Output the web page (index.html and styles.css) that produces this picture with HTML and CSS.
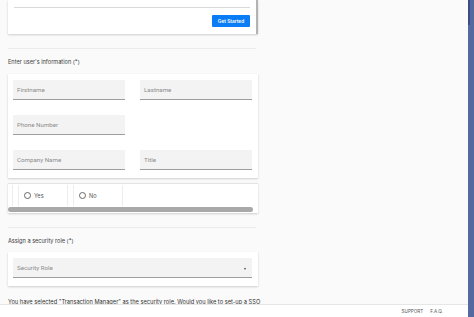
FILE: index.html
```html
<!DOCTYPE html>
<html lang="en">
<head>
    <meta charset="UTF-8">
    <meta name="viewport" content="width=device-width, initial-scale=1.0">
    <title>New User</title>
    <link rel="stylesheet" href="styles.css">
</head>
<body>
    <div class="app">
        <div class="main">
            <div class="content">
                <div class="card card-top">
                    <div class="card-rule"></div>
                    <div class="actions">
                        <button class="btn-primary">Get Started</button>
                    </div>
                </div>

                <hr class="divider">

                <p class="section-label">Enter user's information (*)</p>
                <div class="card form-card">
                    <div class="field">Firstname</div>
                    <div class="field">Lastname</div>
                    <div class="field">Phone Number</div>
                    <div class="field-empty"></div>
                    <div class="field">Company Name</div>
                    <div class="field">Title</div>
                </div>

                <div class="card radio-card">
                    <div class="radio-row">
                        <div class="cell cell-thin"></div>
                        <div class="cell cell-gap"></div>
                        <label class="cell cell-option"><span class="radio"></span>Yes</label>
                        <div class="cell cell-gap"></div>
                        <label class="cell cell-option"><span class="radio"></span>No</label>
                    </div>
                    <div class="scroll-track">
                        <div class="scroll-thumb"></div>
                    </div>
                </div>

                <hr class="divider">

                <p class="section-label">Assign a security role (*)</p>
                <div class="card select-card">
                    <div class="field select">
                        <span>Security Role</span>
                        <span class="caret"></span>
                    </div>
                </div>

                <p class="question">You have selected "Transaction Manager" as the security role. Would you like to set-up a SSO for this user? (*)</p>
            </div>
            <footer class="footer">
                <a href="#">SUPPORT</a>
                <a href="#">F.A.Q.</a>
            </footer>
        </div>
        <div class="sidebar">
            <div class="sidebar-mark"></div>
        </div>
    </div>
</body>
</html>
```

FILE: styles.css
```css
body {
    margin: 0;
    font-family: 'Inter', 'Roboto', sans-serif;
    background-color: #fafafa;
    color: #333333;
}
.app {
    display: flex;
    height: 317px;
    overflow: hidden;
}
.main {
    flex: 1;
    display: flex;
    flex-direction: column;
    background-color: #fafafa;
}
.content {
    flex: 1;
    overflow: hidden;
    padding-left: 8px;
    width: 262px;
}
.card {
    background-color: #ffffff;
    box-shadow: 0 1px 2px rgba(0,0,0,0.18);
    width: 250px;
    box-sizing: border-box;
}
.card-top {
    height: 34px;
    padding: 7px 6px 0 6px;
    border-right: 2px solid #b3b3b3;
}
.card-rule {
    height: 1px;
    background-color: #d9d9d9;
}
.actions {
    display: flex;
    justify-content: flex-end;
    margin-top: 7px;
}
.btn-primary {
    background-color: #0a7cf5;
    color: #ffffff;
    border: none;
    border-radius: 1px;
    height: 12px;
    width: 38px;
    padding: 0;
    font-family: 'Inter', sans-serif;
    font-size: 4.8px;
    font-weight: 600;
}
.divider {
    border: none;
    border-top: 1px solid #ececec;
    margin: 14px 0 0 0;
    width: 248px;
}
.section-label {
    margin: 9px 0 0 0;
    font-size: 5.6px;
    line-height: 8px;
    color: #3a3a3a;
}
.form-card {
    margin-top: 8px;
    display: grid;
    grid-template-columns: 112px 112px;
    column-gap: 15px;
    row-gap: 15px;
    padding: 6px 6px 8px 5px;
}
.field {
    height: 20px;
    box-sizing: border-box;
    background-color: #f3f3f3;
    border-bottom: 1px solid #9e9e9e;
    padding-left: 4px;
    display: flex;
    align-items: center;
    font-family: 'Roboto', sans-serif;
    font-size: 6.2px;
    color: #8c8c8c;
}
.radio-card {
    margin-top: 5px;
    padding-top: 1px;
    border-top: 1px solid #e4e4e4;
}
.radio-row {
    display: flex;
    height: 21px;
}
.cell {
    border-right: 1px solid #ededed;
}
.cell-thin {
    width: 4px;
}
.cell-gap {
    width: 5px;
}
.cell-option {
    width: 43px;
    display: flex;
    align-items: center;
    padding-left: 5px;
    font-size: 5.6px;
    color: #555555;
}
.radio {
    width: 5px;
    height: 5px;
    border: 1px solid #666666;
    border-radius: 50%;
    margin-right: 3px;
}
.scroll-track {
    display: flex;
    align-items: center;
    height: 7px;
    padding-right: 5px;
}
.scroll-thumb {
    flex: 1;
    height: 5px;
    background-color: #a9a9a9;
    border-radius: 3px;
}
.select-card {
    margin-top: 7px;
    padding: 6px 6px 8px 5px;
}
.select {
    justify-content: space-between;
    padding-right: 6px;
}
.caret {
    width: 0;
    height: 0;
    border-left: 1.5px solid transparent;
    border-right: 1.5px solid transparent;
    border-top: 2px solid #444444;
    margin-top: 3px;
}
.question {
    margin: 12px 0 0 0;
    width: 258px;
    font-size: 5.7px;
    line-height: 8px;
    color: #333333;
}
.footer {
    height: 12px;
    flex-shrink: 0;
    background-color: #ffffff;
    border-top: 1px solid #e6e6e6;
    display: flex;
    justify-content: flex-end;
    align-items: center;
    gap: 7px;
    padding-right: 25px;
}
.footer a {
    color: #555555;
    text-decoration: none;
    font-size: 4.6px;
}
.sidebar {
    width: 6px;
    background-color: #5569a0;
    position: relative;
}
.sidebar-mark {
    width: 2px;
    height: 25px;
    background-color: #3c4c80;
}
```
